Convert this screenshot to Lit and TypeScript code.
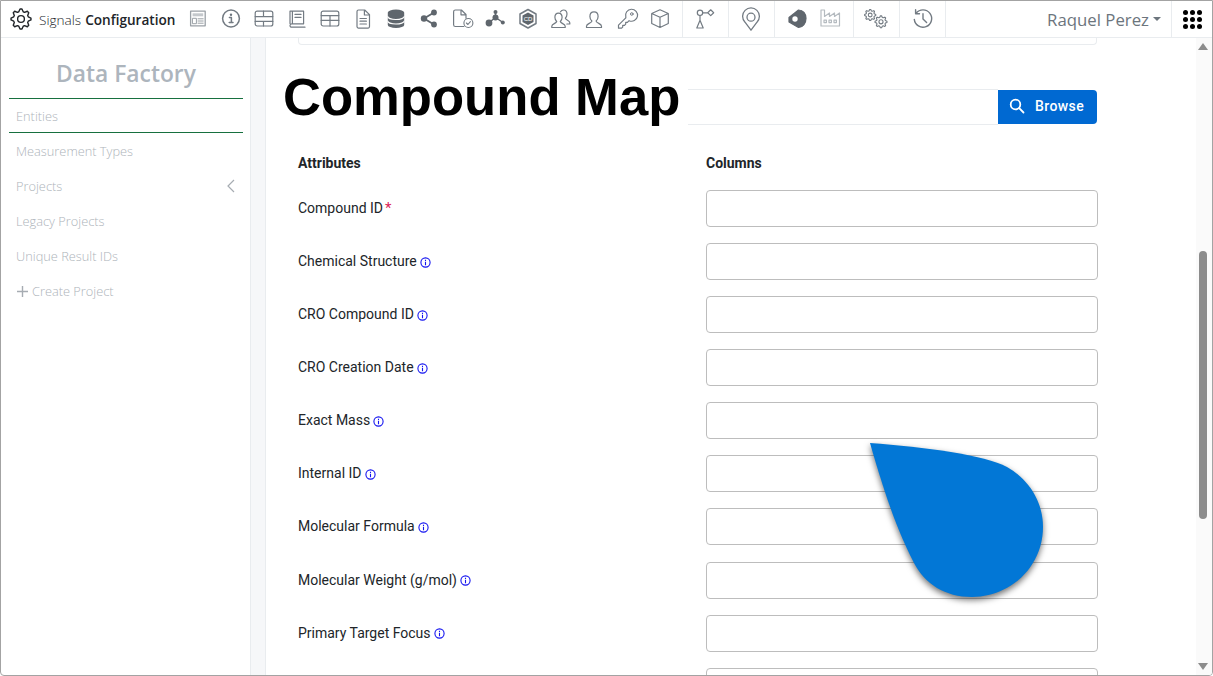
import { LitElement, html, css, svg } from 'lit';
import { customElement } from 'lit/decorators.js';

const gear = (cx: number, cy: number, r: number) => {
  const teeth = 8;
  const pts: string[] = [];
  for (let i = 0; i < teeth * 4; i++) {
    const rad = i % 4 === 0 || i % 4 === 1 ? r : r * 0.76;
    const a = ((i - 0.5) / (teeth * 4)) * Math.PI * 2;
    pts.push(`${(cx + Math.cos(a) * rad).toFixed(2)},${(cy + Math.sin(a) * rad).toFixed(2)}`);
  }
  return svg`<polygon points=${pts.join(' ')} /><circle cx=${cx} cy=${cy} r=${r * 0.34} />`;
};

const ICONS: Record<string, unknown> = {
  layout: svg`<g stroke="#9aa0a6" stroke-width="1.3"><rect x="4.6" y="4.2" width="14.6" height="14.6" /><rect x="6.6" y="6.3" width="10.6" height="3" fill="#c4c8cc" stroke="none" /><rect x="6.8" y="11.3" width="3.6" height="5.4" stroke-width="1" /><path d="M12 11.8h5.2M12 14h5.2M12 16.2h5.2" stroke-width="1" /></g>`,
  info: svg`<circle cx="12" cy="11.5" r="8.4" stroke-width="1.5" /><circle cx="12" cy="7.8" r="1.2" fill="#6c757d" stroke="none" /><path d="M10.4 10.6h2v4.6M10.2 15.4h3.8" stroke-width="1.5" />`,
  table: svg`<rect x="3.2" y="4.2" width="17.6" height="14.8" rx="2" /><path d="M3.2 9.6h17.6M3.2 14.4h17.6M11.5 4.2v5.4M11.5 14.4v4.6" />`,
  book: svg`<path d="M5 16.5V4.2h13.6v12.6H6.7A1.8 1.8 0 0 0 5 18.6 1.6 1.6 0 0 0 6.7 20.2H20M7.4 4.2v12.4M10 7.4h6M10 10.4h6" />`,
  table2: svg`<rect x="3.2" y="4.2" width="17.6" height="14.8" rx="2" /><path d="M3.2 8.6h17.6M3.2 13.4h17.6M12 8.6v10.4" />`,
  doc: svg`<path d="M6 4.5A1.5 1.5 0 0 1 7.5 3h6.2l4.8 4.6v12a1.5 1.5 0 0 1-1.5 1.5H7.5A1.5 1.5 0 0 1 6 19.6ZM13.4 3v5h5.1M9 11.5h6.4M9 14.2h6.4M9 17h6.4" />`,
  db: svg`<path d="M3.8 5.5a8.2 3 0 0 1 16.4 0V18a8.2 3 0 0 1-16.4 0Z" fill="#5f666d" stroke="none" /><path d="M3.8 9.5a8.2 3 0 0 0 16.4 0M3.8 14a8.2 3 0 0 0 16.4 0" stroke="#fff" stroke-width="1.1" />`,
  share: svg`<g fill="#5f666d" stroke="#5f666d"><path d="M7 11.5 17 5.5M7 11.5l10 6" stroke-width="1.9" /><circle cx="7" cy="11.5" r="3.2" stroke="none" /><circle cx="17" cy="5.5" r="2.9" stroke="none" /><circle cx="17" cy="17.5" r="2.9" stroke="none" /></g>`,
  filecheck: svg`<path d="M13.8 19.5H5.4a1.8 1.8 0 0 1-1.8-1.8V4.8A1.8 1.8 0 0 1 5.4 3h6L16 7.5v3.7M11 3v4.8h5" /><circle cx="18.4" cy="16" r="4.5" stroke-width="1.1" /><path d="m16.4 16 1.5 1.5 2.5-2.8" stroke-width="1.1" />`,
  molecule: svg`<g fill="#5f666d" stroke="#5f666d"><path d="M12.5 5v6M12.5 10.5 5.5 16M12.5 10.5l7.5 5" stroke-width="1.5" /><circle cx="12.5" cy="5" r="2" stroke="none" /><circle cx="12.5" cy="10.5" r="3" stroke="none" /><circle cx="6" cy="16" r="3.4" stroke="none" /><circle cx="19.8" cy="15.5" r="2" stroke="none" /></g>`,
  hex: svg`<path d="M12 2.5 20 7v9.5L12 21l-8-4.5V7Z" stroke-width="1.5" /><path d="M12 5.5 17.5 8.5V15L12 18l-5.5-3V8.5Z" fill="#5f666d" stroke="none" /><text x="12" y="14" text-anchor="middle" font-size="6" font-family="Liberation Sans, sans-serif" fill="#fff" stroke="none">CD</text>`,
  users: svg`<path d="M2.8 20.5h13.4v-1.3c0-2.4-4.3-2.6-4.9-4.7 1.2-1 1.8-2.5 1.8-4.2 0-2.5-1.4-4.2-3.6-4.2S5.9 7.8 5.9 10.3c0 1.7.6 3.2 1.8 4.2-.6 2.1-4.9 2.3-4.9 4.7ZM11.5 4.8c.7-1.2 1.7-1.8 3-1.8 2.1 0 3.5 1.7 3.5 4.1 0 1.6-.6 3.1-1.7 4 .5 2 4.5 2.3 4.5 4.6v1.3h-3" stroke-width="1.2" />`,
  user: svg`<path d="M4.5 20.5h15v-1.3c0-2.6-4.8-2.8-5.4-5.1 1.3-1 2-2.8 2-4.5 0-2.9-1.6-4.8-4.1-4.8S7.9 6.7 7.9 9.6c0 1.7.7 3.5 2 4.5-.6 2.3-5.4 2.500-5.400 5.100Z" stroke-width="1.2" />`,
  key: svg`<path d="M10.8 10.9 3.5 18.2v3h3.1l1.1-1.1v-1.8h1.8l1.2-1.2v-1.700h1.700l1.700-1.700a6 6 0 1 0-3.300-3.800Z" stroke-width="1.2" /><circle cx="16.8" cy="7" r="1.3" stroke-width="1" />`,
  cube: svg`<path d="M12 2.8 20.3 6.5v10L12 20.5 3.7 16.5v-10ZM3.7 6.500 12 10.300l8.300-3.800M12 10.300v10.200" stroke-width="1.2" />`,
  flow: svg`<circle cx="7" cy="5.8" r="2.7" /><path d="M17.7 2.8 20.7 5.7 17.7 8.600 14.700 5.700ZM9.700 5.800h5M7 8.500v4.800M7 13.300 10.200 21H3.800Z" />`,
  pin: svg`<path d="M12 23.200 6 15.200a8.400 8.400 0 1 1 12 0Z" stroke-width="1.3" /><circle cx="12" cy="10.2" r="4" stroke-width="1.3" />`,
  shield: svg`<path d="M4 10.500 13.500 3c4.500 0 7.500 3.500 7.500 8.200 0 5-3 9.300-7.500 9.300L4 15Z" fill="#5f666d" stroke="#5f666d" stroke-linejoin="round" /><circle cx="10" cy="12" r="2.7" fill="#fff" stroke="none" />`,
  factory: svg`<g stroke="#b5bbc0" stroke-width="1.2"><path d="M3 19V3h3.500v6.500L11.500 6v3.500L16.500 6v3.500L21.500 6v13Z" /><rect x="6" y="13.2" width="2.4" height="2.4" /><rect x="11" y="13.2" width="2.4" height="2.4" /><rect x="16" y="13.2" width="2.4" height="2.4" /></g>`,
  gears: svg`<g stroke-width="1.1">${gear(6.2, 8, 5.6)}${gear(17, 14.8, 6)}</g>`,
  history: svg`<path d="M6.100 6.200A8.700 8.700 0 1 1 4.300 12.400M5.600 2.800v3.900h3.900M13 6.800v5.300l3.600 3.500" stroke-width="1.4" />`,
};

const icon = (name: string) => html`<svg class="ic" viewBox="0 0 24 24" aria-hidden="true">${ICONS[name]}</svg>`;

const ATTRS = [
  'Chemical Structure', 'CRO Compound ID', 'CRO Creation Date', 'Exact Mass', 'Internal ID',
  'Molecular Formula', 'Molecular Weight (g/mol)', 'Primary Target Focus',
];

const NAV = ['Measurement Types', 'Projects', 'Legacy Projects', 'Unique Result IDs'];

const infoDot = html`<svg class="info" viewBox="0 0 11 11" aria-hidden="true"><circle cx="5.5" cy="5.5" r="4.6" /><path d="M5.5 2.8v1.1M5.5 4.8v3.4" /></svg>`;

@customElement('app-root')
export class AppRoot extends LitElement {
  static styles = css`
    :host {
      display: flex;
      flex-direction: column;
      position: relative;
      box-sizing: border-box;
      height: 676px;
      overflow: hidden;
      border: 1px solid #a3a3a3;
      border-radius: 0 0 4px 4px;
      background: #fff;
      font-family: Roboto, sans-serif;
      color: #212529;
    }
    header {
      flex: 0 0 36px;
      display: flex;
      align-items: stretch;
      border-bottom: 1px solid #e9ecef;
    }
    .brand {
      display: flex;
      align-items: center;
      flex: 0 0 180.5px;
      padding-left: 8px;
      box-sizing: border-box;
      font-family: 'Open Sans', sans-serif;
      font-size: 13.6px;
      color: #212529;
      white-space: nowrap;
    }
    .brand .gear { width: 24px; height: 24px; margin-right: 6px; fill: none; stroke: #212529; stroke-width: 1.4; stroke-linejoin: round; }
    .brand span { font-weight: 300; }
    .brand b { font-weight: 600; margin-left: 4px; }
    .cell { display: flex; align-items: center; justify-content: center; flex: 0 0 33px; }
    .ic {
      width: 24px;
      height: 24px;
      fill: none;
      stroke: #737b83;
      stroke-width: 1.2;
      stroke-linejoin: round;
      stroke-linecap: round;
    }
    .group { display: flex; align-items: stretch; justify-content: center; border-right: 1px solid #e9ecef; box-sizing: border-box; }
    .g-main { flex: 0 0 501px; justify-content: flex-start; }
    .g-one { flex: 0 0 46px; }
    .g-two { flex: 0 0 79px; }
    .spacer { flex: 1; }
    .user {
      display: flex;
      align-items: center;
      padding-right: 10px;
      font-family: 'Open Sans', sans-serif;
      font-size: 16.8px;
      font-weight: 500;
      color: #6c757d;
      white-space: nowrap;
    }
    .caret { width: 0; height: 0; margin-left: 4px; border: 4px solid transparent; border-top-color: #6c757d; border-bottom: 0; }
    .apps {
      flex: 0 0 41px;
      display: flex;
      align-items: center;
      justify-content: center;
      border-left: 1px solid #e9ecef;
      box-sizing: border-box;
    }
    .dots { display: grid; grid-template-columns: repeat(3, 5px); gap: 2px; }
    .dots i { width: 5px; height: 5px; border-radius: 50%; background: #000; }
    .body { flex: 1; display: flex; min-height: 0; }
    aside {
      flex: 0 0 250px;
      box-sizing: border-box;
      padding: 0 7px 0 8px;
      border-right: 1px solid #e9ecef;
      font-family: 'Open Sans', sans-serif;
      color: #aeb4ba;
    }
    .title {
      height: 60px;
      line-height: 72px;
      text-align: center;
      font-size: 22.8px;
      font-weight: 600;
      color: #adb5bd;
      white-space: nowrap;
    }
    .nav {
      display: flex;
      align-items: center;
      justify-content: space-between;
      box-sizing: border-box;
      height: 35px;
      padding: 1px 7px 0;
      font-size: 12.8px;
      font-weight: 300;
      white-space: nowrap;
    }
    .nav.active { border-top: 1px solid #17703f; border-bottom: 1px solid #17703f; }
    .nav svg { width: 10px; height: 14px; fill: none; stroke: #a6acb2; stroke-width: 1.2; }
    .nav .plus { width: 11px; height: 11px; margin-right: 4px; stroke-width: 1.4; }
    .create { justify-content: flex-start; padding-left: 8px; }
    .gutter { flex: 0 0 14px; background: #f6f7f9; border-right: 1px solid #e9ecef; }
    main {
      flex: 1;
      min-width: 0;
      overflow: hidden;
      padding: 0 99px 0 32px;
    }
    .stub { height: 6px; border: 1px solid #e9ecef; border-top: 0; border-radius: 0 0 4px 4px; }
    .search { display: flex; margin: 22px 0 0 -15px; height: 60px; }
    h1 {
      flex: 0 0 405px;
      margin: 0;
      font: 700 52.6px/60px 'Liberation Sans', Arial, sans-serif;
      color: #000;
      white-space: nowrap;
    }
    .path { flex: 1; align-self: flex-end; height: 36px; margin-bottom: 2px; box-sizing: border-box; border-top: 1px solid #e9ecef; border-bottom: 1px solid #e9ecef; }
    .browse {
      flex: 0 0 99px;
      align-self: flex-end;
      height: 34px;
      margin-bottom: 3px;
      box-sizing: border-box;
      display: flex;
      align-items: center;
      gap: 10px;
      padding: 0 0 2px 11px;
      border-radius: 0 4px 4px 0;
      background: #0069d2;
      color: #fff;
      font-size: 14px;
      font-weight: 500;
      letter-spacing: 0.4px;
    }
    .browse svg { width: 16px; height: 16px; fill: none; stroke: #fff; stroke-width: 1.8; stroke-linecap: round; }
    .grid {
      display: grid;
      grid-template-columns: 408px 392px;
      grid-auto-rows: 37px;
      row-gap: 16.08px;
      align-items: center;
      font-size: 14px;
    }
    .heads {
      display: grid;
      grid-template-columns: 408px 392px;
      margin: 26px 0 17px;
      height: 20px;
      align-items: center;
      font-size: 14px;
      font-weight: 700;
    }
    .label { display: flex; align-items: center; gap: 3px; line-height: 17px; white-space: nowrap; }
    .star { color: #dc1e5a; margin-left: -1px; font-size: 15px; }
    .info { width: 11px; height: 11px; margin-top: 1px; fill: none; stroke: #1414f0; stroke-width: 1.1; }
    .box { height: 37px; box-sizing: border-box; border: 1px solid #bdbdbd; border-radius: 4px; background: #fff; }
    .scroll { flex: 0 0 16px; box-sizing: border-box; padding-right: 2px; display: flex; flex-direction: column; align-items: center; background: #fafafa; }
    .up, .down { width: 0; height: 0; border: 5px solid transparent; }
    .up { margin-top: 5px; border-top: 0; border-bottom: 7px solid #8c8c8c; }
    .down { margin-top: auto; margin-bottom: 5px; border-bottom: 0; border-top: 7px solid #8c8c8c; }
    .thumb { width: 8px; height: 268px; margin-top: 201px; border-radius: 4px; background: #8c8c8c; }
    .drop {
      position: absolute;
      left: 859px;
      top: 434px;
      width: 200px;
      height: 180px;
      overflow: visible;
      filter: drop-shadow(0 3px 3px rgba(0, 0, 0, 0.55));
    }
  `;

  render() {
    const before = ['layout', 'info', 'table', 'book', 'table2', 'doc', 'db', 'share', 'filecheck', 'molecule', 'hex', 'users', 'user', 'key', 'cube'];
    return html`
      <header>
        <div class="brand">
          <svg class="gear" viewBox="0 0 24 24">${gear(12, 12, 10)}</svg>
          <span>Signals</span><b>Configuration</b>
        </div>
        <div class="group g-main">${before.map((n) => html`<div class="cell">${icon(n)}</div>`)}</div>
        <div class="group g-one"><div class="cell">${icon('flow')}</div></div>
        <div class="group g-one"><div class="cell">${icon('pin')}</div></div>
        <div class="group g-two"><div class="cell">${icon('shield')}</div><div class="cell">${icon('factory')}</div></div>
        <div class="group g-one"><div class="cell">${icon('gears')}</div></div>
        <div class="group g-one"><div class="cell">${icon('history')}</div></div>
        <div class="spacer"></div>
        <div class="user">Raquel Perez<span class="caret"></span></div>
        <div class="apps"><div class="dots">${Array.from({ length: 9 }, () => html`<i></i>`)}</div></div>
      </header>
      <div class="body">
        <aside>
          <div class="title">Data Factory</div>
          <div class="nav active">Entities</div>
          ${NAV.map((n) => html`<div class="nav">${n}${n === 'Projects' ? html`<svg viewBox="0 0 10 14"><path d="M8 1 2 7l6 6" /></svg>` : ''}</div>`)}
          <div class="nav create"><svg class="plus" viewBox="0 0 11 11"><path d="M5.5 0v11M0 5.5h11" /></svg>Create Project</div>
        </aside>
        <div class="gutter"></div>
        <main>
          <div class="stub"></div>
          <div class="search">
            <h1>Compound Map</h1>
            <div class="path"></div>
            <div class="browse">
              <svg viewBox="0 0 16 16"><circle cx="6.5" cy="6.5" r="4.8" /><path d="m10.2 10.2 4.3 4.3" /></svg>
              Browse
            </div>
          </div>
          <div class="heads"><div>Attributes</div><div>Columns</div></div>
          <div class="grid">
            <div class="label">Compound ID<span class="star">*</span></div>
            <div class="box"></div>
            ${ATTRS.map((a) => html`<div class="label">${a}${infoDot}</div><div class="box"></div>`)}
            <div class="label"></div>
            <div class="box"></div>
          </div>
        </main>
        <div class="scroll">
          <div class="up"></div>
          <div class="thumb"></div>
          <div class="down"></div>
        </div>
      </div>
      <svg class="drop" viewBox="860 435 200 180">
        <path d="M870 443C925 447 985 455 1007 467C1030 480 1043 503 1043 527C1043 566 1011 597 972 597C945 597 925 584 914 563C897 530 885 495 870 443Z" fill="#0277d6" />
      </svg>
    `;
  }
}
